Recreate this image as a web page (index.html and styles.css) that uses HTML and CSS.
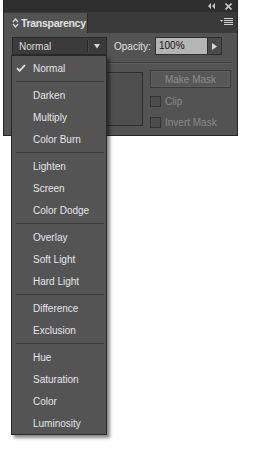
FILE: index.html
```html
<!DOCTYPE html>
<html lang="en">
<head>
    <meta charset="UTF-8">
    <meta name="viewport" content="width=device-width, initial-scale=1.0">
    <title>Transparency</title>
    <link rel="stylesheet" href="styles.css">
</head>
<body>

<div class="page">
    <div class="panel">
        <div class="topbar">
            <svg class="collapse" width="7" height="6" viewBox="0 0 7 6"><path d="M3 0 L0 3 L3 6Z M7 0 L4 3 L7 6Z" fill="#c9c9c9"/></svg>
            <svg class="close" width="7" height="7" viewBox="0 0 7 7"><path d="M0.5 0.5 L6.5 6.5 M6.5 0.5 L0.5 6.5" stroke="#c9c9c9" stroke-width="1.6"/></svg>
        </div>

        <div class="tabbar">
            <div class="tab">
                <svg width="7" height="10" viewBox="0 0 7 10"><path d="M1 4 L3.5 1 L6 4 M1 6 L3.5 9 L6 6" stroke="#d8d8d8" stroke-width="1.3" fill="none"/></svg>
                <span>Transparency</span>
            </div>
            <svg class="panel-menu" width="13" height="8" viewBox="0 0 13 8"><path d="M0 2 L3 2 L1.5 4Z" fill="#d0d0d0"/><path d="M4 0.5H13M4 2.5H13M4 4.5H13M4 6.5H13" stroke="#d0d0d0" stroke-width="1"/></svg>
        </div>

        <div class="body">
            <div class="controls">
                <div class="select">
                    <span class="select-value">Normal</span>
                    <span class="select-arrow">
                        <svg width="6" height="5" viewBox="0 0 6 5"><path d="M0 0 H6 L3 4.5Z" fill="#d6d6d6"/></svg>
                    </span>
                </div>
                <span class="label">Opacity:</span>
                <div class="field">100%</div>
                <div class="field-btn">
                    <svg width="5" height="7" viewBox="0 0 5 7"><path d="M0 0 L5 3.5 L0 7Z" fill="#d6d6d6"/></svg>
                </div>
            </div>

            <div class="rule"></div>

            <div class="content">
                <div class="thumb"></div>
                <div class="mask-col">
                    <div class="mask-btn">Make Mask</div>
                    <div class="check"><span class="box"></span>Clip</div>
                    <div class="check"><span class="box"></span>Invert Mask</div>
                </div>
            </div>
        </div>
    </div>

    <div class="menu">
        <div class="item">
            <span class="mark"><svg width="10" height="8" viewBox="0 0 10 8"><path d="M1 4.2 L3.6 6.8 L9 1" stroke="#e4e4e4" stroke-width="1.8" fill="none"/></svg></span>Normal
        </div>
        <div class="sep"></div>
        <div class="item"><span class="mark"></span>Darken</div>
        <div class="item"><span class="mark"></span>Multiply</div>
        <div class="item"><span class="mark"></span>Color Burn</div>
        <div class="sep"></div>
        <div class="item"><span class="mark"></span>Lighten</div>
        <div class="item"><span class="mark"></span>Screen</div>
        <div class="item"><span class="mark"></span>Color Dodge</div>
        <div class="sep"></div>
        <div class="item"><span class="mark"></span>Overlay</div>
        <div class="item"><span class="mark"></span>Soft Light</div>
        <div class="item"><span class="mark"></span>Hard Light</div>
        <div class="sep"></div>
        <div class="item"><span class="mark"></span>Difference</div>
        <div class="item"><span class="mark"></span>Exclusion</div>
        <div class="sep"></div>
        <div class="item"><span class="mark"></span>Hue</div>
        <div class="item"><span class="mark"></span>Saturation</div>
        <div class="item"><span class="mark"></span>Color</div>
        <div class="item"><span class="mark"></span>Luminosity</div>
    </div>
</div>

</body>
</html>
```

FILE: styles.css
```css
body {
    margin: 0;
    background: #ffffff;
    font-family: 'Liberation Sans', Arial, sans-serif;
    font-size: 10px;
}

.page {
    position: relative;
    width: 269px;
    height: 455px;
}

.panel {
    width: 233px;
    margin-left: 3px;
    border: 1px solid #262626;
    border-top: none;
    background: #535353;
}

/* barra superior */
.topbar {
    height: 12px;
    background: #2f2f2f;
    display: flex;
    align-items: center;
    justify-content: flex-end;
    gap: 10px;
    padding-right: 5px;
}

.tabbar {
    height: 21px;
    background: #3a3a3a;
    display: flex;
    align-items: flex-end;
    justify-content: space-between;
}

.tab {
    width: 84px;
    height: 20px;
    background: #535353;
    border-right: 1px solid #2c2c2c;
    display: flex;
    align-items: center;
    gap: 2px;
    padding-left: 8px;
    box-sizing: border-box;
    color: #e2e2e2;
    font-weight: bold;
    font-size: 10.5px;
    letter-spacing: -0.3px;
}

.panel-menu {
    margin: 0 4px 7px 0;
}

.body {
    padding: 4px 0 7px 8px;
}

.controls {
    display: flex;
    align-items: center;
    height: 18px;
}

.select {
    width: 95px;
    height: 18px;
    box-sizing: border-box;
    background: #3b3b3b;
    border: 1px solid #2a2a2a;
    display: flex;
    align-items: center;
    color: #dedede;
}

.select-value {
    flex: 1;
    padding-left: 6px;
}

.select-arrow {
    width: 18px;
    height: 12px;
    border-left: 1px solid #2a2a2a;
    box-shadow: inset 1px 0 0 #4a4a4a;
    display: flex;
    align-items: center;
    justify-content: center;
}

.label {
    margin-left: 7px;
    width: 41px;
    color: #e0e0e0;
}

.field {
    width: 53px;
    height: 18px;
    box-sizing: border-box;
    background: #b5b5b5;
    border: 1px solid #2e2e2e;
    color: #111;
    padding-left: 3px;
    line-height: 16px;
}

.field-btn {
    width: 14px;
    height: 18px;
    box-sizing: border-box;
    background: #4b4b4b;
    border: 1px solid #2e2e2e;
    border-left: none;
    display: flex;
    align-items: center;
    justify-content: center;
}

.rule {
    width: 220px;
    height: 1px;
    margin-top: 7px;
    background: #3e3e3e;
    box-shadow: 0 1px 0 #5c5c5c;
}

.content {
    display: flex;
    gap: 7px;
    margin-top: 7px;
}

.thumb {
    width: 131px;
    height: 54px;
    margin-top: 2px;
    box-sizing: border-box;
    border: 1px solid #2e2e2e;
    background: #4f4f4f;
}

.mask-col {
    width: 81px;
}

.mask-btn {
    height: 18px;
    box-sizing: border-box;
    border: 1px solid #3a3a3a;
    background: #575757;
    box-shadow: inset 0 0 0 1px #5f5f5f;
    color: #8c8c8c;
    display: flex;
    align-items: center;
    justify-content: center;
}

.check {
    display: flex;
    align-items: center;
    gap: 4px;
    height: 11px;
    margin-top: 8px;
    color: #8a8a8a;
}

.check + .check {
    margin-top: 10px;
}

.box {
    width: 11px;
    height: 11px;
    box-sizing: border-box;
    border: 1px solid #333;
    background: #4c4c4c;
}

/* menu desplegable */
.menu {
    position: absolute;
    left: 11px;
    top: 55px;
    width: 96px;
    box-sizing: border-box;
    padding: 1px 0 0;
    background: #545454;
    border: 1px solid #282828;
    box-shadow: 3px 3px 3px rgba(0, 0, 0, 0.45);
}

.item {
    height: 22px;
    display: flex;
    align-items: center;
    color: #e4e6ea;
}

.mark {
    width: 21px;
    display: flex;
    padding-left: 4px;
    box-sizing: border-box;
}

.sep {
    height: 1px;
    margin: 2px 2px 2px 4px;
    background: #3c3c3c;
}
```
